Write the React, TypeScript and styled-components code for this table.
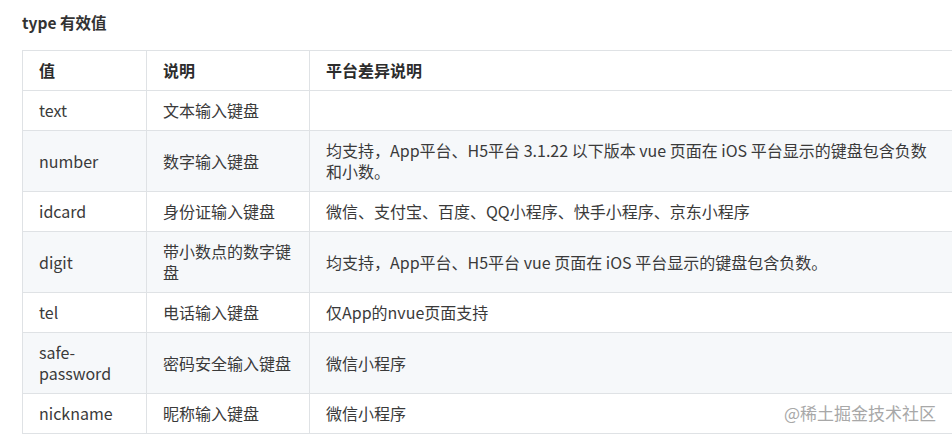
import React from "react";
import styled, { createGlobalStyle } from "styled-components";

const Global = createGlobalStyle`
  html, body { margin: 0; padding: 0; background: #fff; }
  body { font-family: "Noto Sans CJK SC", "Noto Sans", sans-serif; color: #333; overflow: hidden; }
`;

const Page = styled.div`
  position: relative;
  width: 952px;
  height: 446px;
  padding: 11px 0 0 22px;
  box-sizing: border-box;
  overflow: hidden;
`;

const Title = styled.h4`
  margin: 0 0 17px;
  font-size: 15.5px;
  line-height: 22px;
  font-weight: 700;
  color: #333;
`;

const Table = styled.table`
  border-collapse: collapse;
  table-layout: fixed;
  width: 932px;
  font-size: 16px;
  line-height: 21px;
`;

const Row = styled.tr<{ $alt?: boolean }>`
  background: ${(p) => (p.$alt ? "#f6f8fa" : "#fff")};
`;

const Th = styled.th<{ $w?: number }>`
  ${(p) => (p.$w ? `width: ${p.$w}px;` : "")}
  border: 1px solid #dfe2e5;
  padding: 9px 16px;
  text-align: left;
  font-weight: 700;
  color: #2c2c2c;
`;

const Td = styled.td`
  border: 1px solid #dfe2e5;
  padding: 9px 16px;
  vertical-align: middle;
  color: #3a3a3a;
  word-break: break-word;
`;

const Watermark = styled.div`
  position: absolute;
  right: 16px;
  top: 402px;
  font-size: 17px;
  line-height: 22px;
  color: #a8a8a8;
  text-shadow: 0 0 1px #fff;
`;

const rows: [string, string, string][] = [
  ["text", "文本输入键盘", ""],
  [
    "number",
    "数字输入键盘",
    "均支持，App平台、H5平台 3.1.22 以下版本 vue 页面在 iOS 平台显示的键盘包含负数和小数。",
  ],
  ["idcard", "身份证输入键盘", "微信、支付宝、百度、QQ小程序、快手小程序、京东小程序"],
  ["digit", "带小数点的数字键盘", "均支持，App平台、H5平台 vue 页面在 iOS 平台显示的键盘包含负数。"],
  ["tel", "电话输入键盘", "仅App的nvue页面支持"],
  ["safe-password", "密码安全输入键盘", "微信小程序"],
  ["nickname", "昵称输入键盘", "微信小程序"],
];

export default function App() {
  return (
    <>
      <Global />
      <Page>
        <Title>type 有效值</Title>
        <Table>
          <thead>
            <Row>
              <Th $w={91}>值</Th>
              <Th $w={130}>说明</Th>
              <Th>平台差异说明</Th>
            </Row>
          </thead>
          <tbody>
            {rows.map((r, i) => (
              <Row key={r[0]} $alt={i % 2 === 1}>
                <Td>{r[0]}</Td>
                <Td>{r[1]}</Td>
                <Td>{r[2]}</Td>
              </Row>
            ))}
          </tbody>
        </Table>
        <Watermark>@稀土掘金技术社区</Watermark>
      </Page>
    </>
  );
}
